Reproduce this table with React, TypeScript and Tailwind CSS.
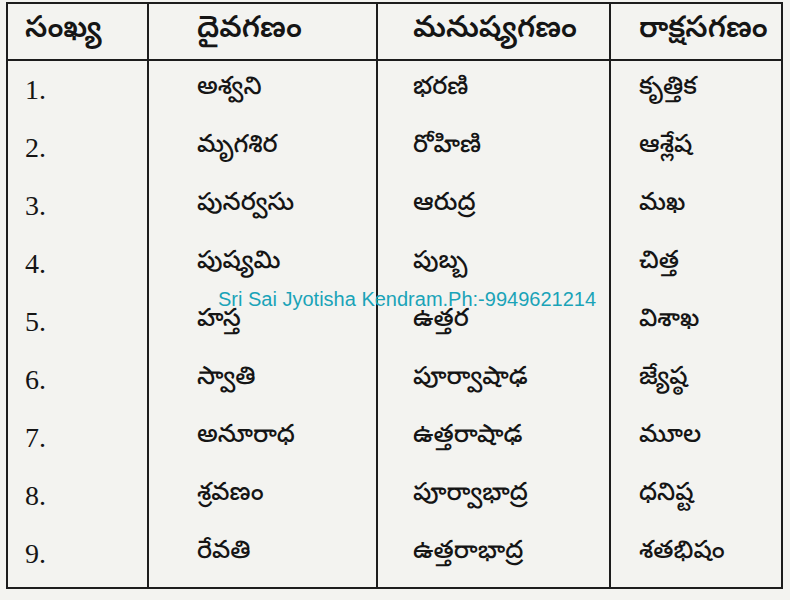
import React from "react";

const rows: [string, string, string, string][] = [
  ["1.", "అశ్వని", "భరణి", "కృత్తిక"],
  ["2.", "మృగశిర", "రోహిణి", "ఆశ్లేష"],
  ["3.", "పునర్వసు", "ఆరుద్ర", "మఖ"],
  ["4.", "పుష్యమి", "పుబ్బ", "చిత్త"],
  ["5.", "హస్త", "ఉత్తర", "విశాఖ"],
  ["6.", "స్వాతి", "పూర్వాషాఢ", "జ్యేష్ఠ"],
  ["7.", "అనూరాధ", "ఉత్తరాషాఢ", "మూల"],
  ["8.", "శ్రవణం", "పూర్వాభాద్ర", "ధనిష్ట"],
  ["9.", "రేవతి", "ఉత్తరాభాద్ర", "శతభిషం"],
];

const tel = { fontFamily: '"Noto Sans Telugu", "Noto Sans", "DejaVu Sans", sans-serif' };

export default function App() {
  return (
    <div className="relative w-[790px] h-[600px] bg-[#f3f3f0] overflow-hidden">
      <div className="absolute left-[6px] top-[2px] w-[777px] h-[587px] border-2 border-[#1c1c1c] flex flex-col text-[#151515]">
        <div className="flex h-[57px] border-b-2 border-[#1c1c1c] text-[30px] font-semibold" style={tel}>
          <div className="w-[141px] border-r-2 border-[#1c1c1c] flex items-center pl-[17px]">సంఖ్య</div>
          <div className="w-[229px] border-r-2 border-[#1c1c1c] flex items-center pl-[48px]">దైవగణం</div>
          <div className="w-[233px] border-r-2 border-[#1c1c1c] flex items-center pl-[35px]">మనుష్యగణం</div>
          <div className="flex-1 flex items-center pl-[28px]">రాక్షసగణం</div>
        </div>
        <div className="flex flex-1">
          <div className="w-[141px] border-r-2 border-[#1c1c1c] flex flex-col pb-[4px]">
            {rows.map((r) => (
              <div key={r[0]} className="flex-1 flex items-center pl-[17px] text-[28px] font-['Liberation_Serif',serif]">
                {r[0]}
              </div>
            ))}
          </div>
          <div className="w-[229px] border-r-2 border-[#1c1c1c] flex flex-col pb-[4px]" style={tel}>
            {rows.map((r) => (
              <div key={r[0]} className="flex-1 flex items-center pl-[48px] text-[25px] font-medium">
                {r[1]}
              </div>
            ))}
          </div>
          <div className="w-[233px] border-r-2 border-[#1c1c1c] flex flex-col pb-[4px]" style={tel}>
            {rows.map((r) => (
              <div key={r[0]} className="flex-1 flex items-center pl-[35px] text-[25px] font-medium">
                {r[2]}
              </div>
            ))}
          </div>
          <div className="flex-1 flex flex-col pb-[4px]" style={tel}>
            {rows.map((r) => (
              <div key={r[0]} className="flex-1 flex items-center pl-[28px] text-[25px] font-medium">
                {r[3]}
              </div>
            ))}
          </div>
        </div>
      </div>
      <div className="absolute left-[218px] top-[287px] text-[20px] leading-[24px] text-[#1aa3b8] font-['Liberation_Sans',Arial,sans-serif]">
        Sri Sai Jyotisha Kendram.Ph:-9949621214
      </div>
    </div>
  );
}
